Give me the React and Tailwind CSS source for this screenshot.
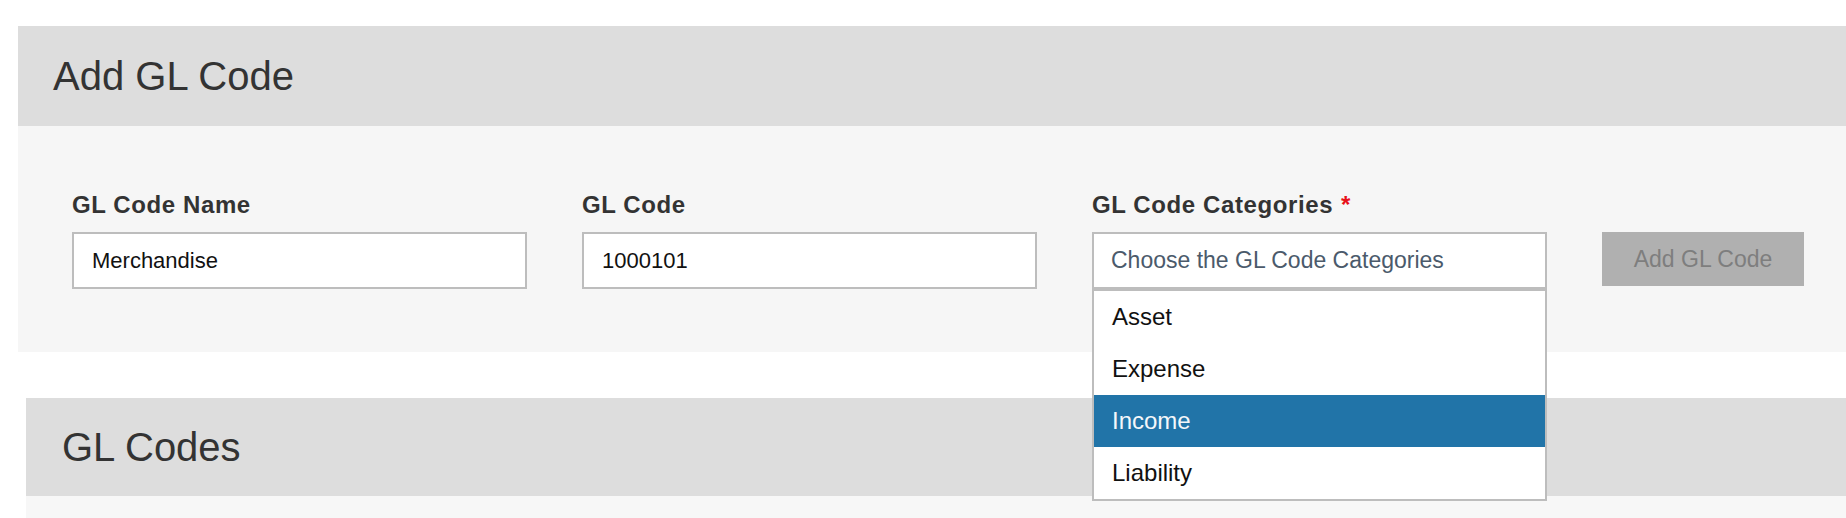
import { useState } from 'react'

const CATEGORIES = ['Asset', 'Expense', 'Income', 'Liability']

function Field({ label, value }) {
  return (
    <div className="w-[455px] flex flex-col">
      <label className="h-[28px] mb-[13px] text-[24px] leading-[28px] font-bold tracking-[0.6px] text-[#333333]">
        {label}
      </label>
      <div className="h-[57px] border-2 border-[#bdbdbd] bg-white flex items-center pl-[18px] text-[22px] text-[#111111]">
        {value}
      </div>
    </div>
  )
}

export default function App() {
  const [active] = useState('Income')

  return (
    <div
      className="w-[1846px] h-[518px] overflow-hidden bg-white pt-[26px]"
      style={{ fontFamily: '"Liberation Sans", Arial, sans-serif' }}
    >
      {/* Add GL Code card */}
      <div className="ml-[18px]">
        <div className="h-[100px] bg-[#dddddd] flex items-center pl-[35px]">
          <h1 className="text-[40px] font-normal text-[#333333]">Add GL Code</h1>
        </div>
        <div className="h-[226px] bg-[#f6f6f6] pt-[65px] pl-[54px]">
          <div className="flex items-start gap-[55px]">
            <Field label="GL Code Name" value="Merchandise" />
            <Field label="GL Code" value="1000101" />

            {/* Category select with open list */}
            <div className="w-[455px] flex flex-col relative z-10">
              <label className="h-[28px] mb-[13px] text-[24px] leading-[28px] font-bold tracking-[0.6px] text-[#333333]">
                GL Code Categories
                <span className="text-[#e8101a] ml-[8px]">*</span>
              </label>
              <div className="h-[57px] border-2 border-[#bdbdbd] bg-white flex items-center pl-[17px] text-[23px] text-[#4b5a6b]">
                Choose the GL Code Categories
              </div>
              <ul className="absolute left-0 right-0 top-[98px] border-2 border-[#bdbdbd] bg-white">
                {CATEGORIES.map(c => (
                  <li
                    key={c}
                    className={`h-[52px] flex items-center pl-[18px] text-[24px] ${
                      c === active ? 'bg-[#2174a8] text-[#f4f7fa]' : 'text-[#111111]'
                    }`}
                  >
                    {c}
                  </li>
                ))}
              </ul>
            </div>

            <button className="mt-[41px] w-[202px] h-[54px] bg-[#b0b0b0] text-[23px] text-[#7e7e7e]">
              Add GL Code
            </button>
          </div>
        </div>
      </div>

      {/* GL Codes card */}
      <div className="ml-[26px] mt-[46px]">
        <div className="h-[98px] bg-[#dddddd] flex items-center pl-[36px]">
          <h2 className="text-[40px] font-normal text-[#333333]">GL Codes</h2>
        </div>
        <div className="h-[40px] bg-[#f7f7f7]" />
      </div>
    </div>
  )
}
